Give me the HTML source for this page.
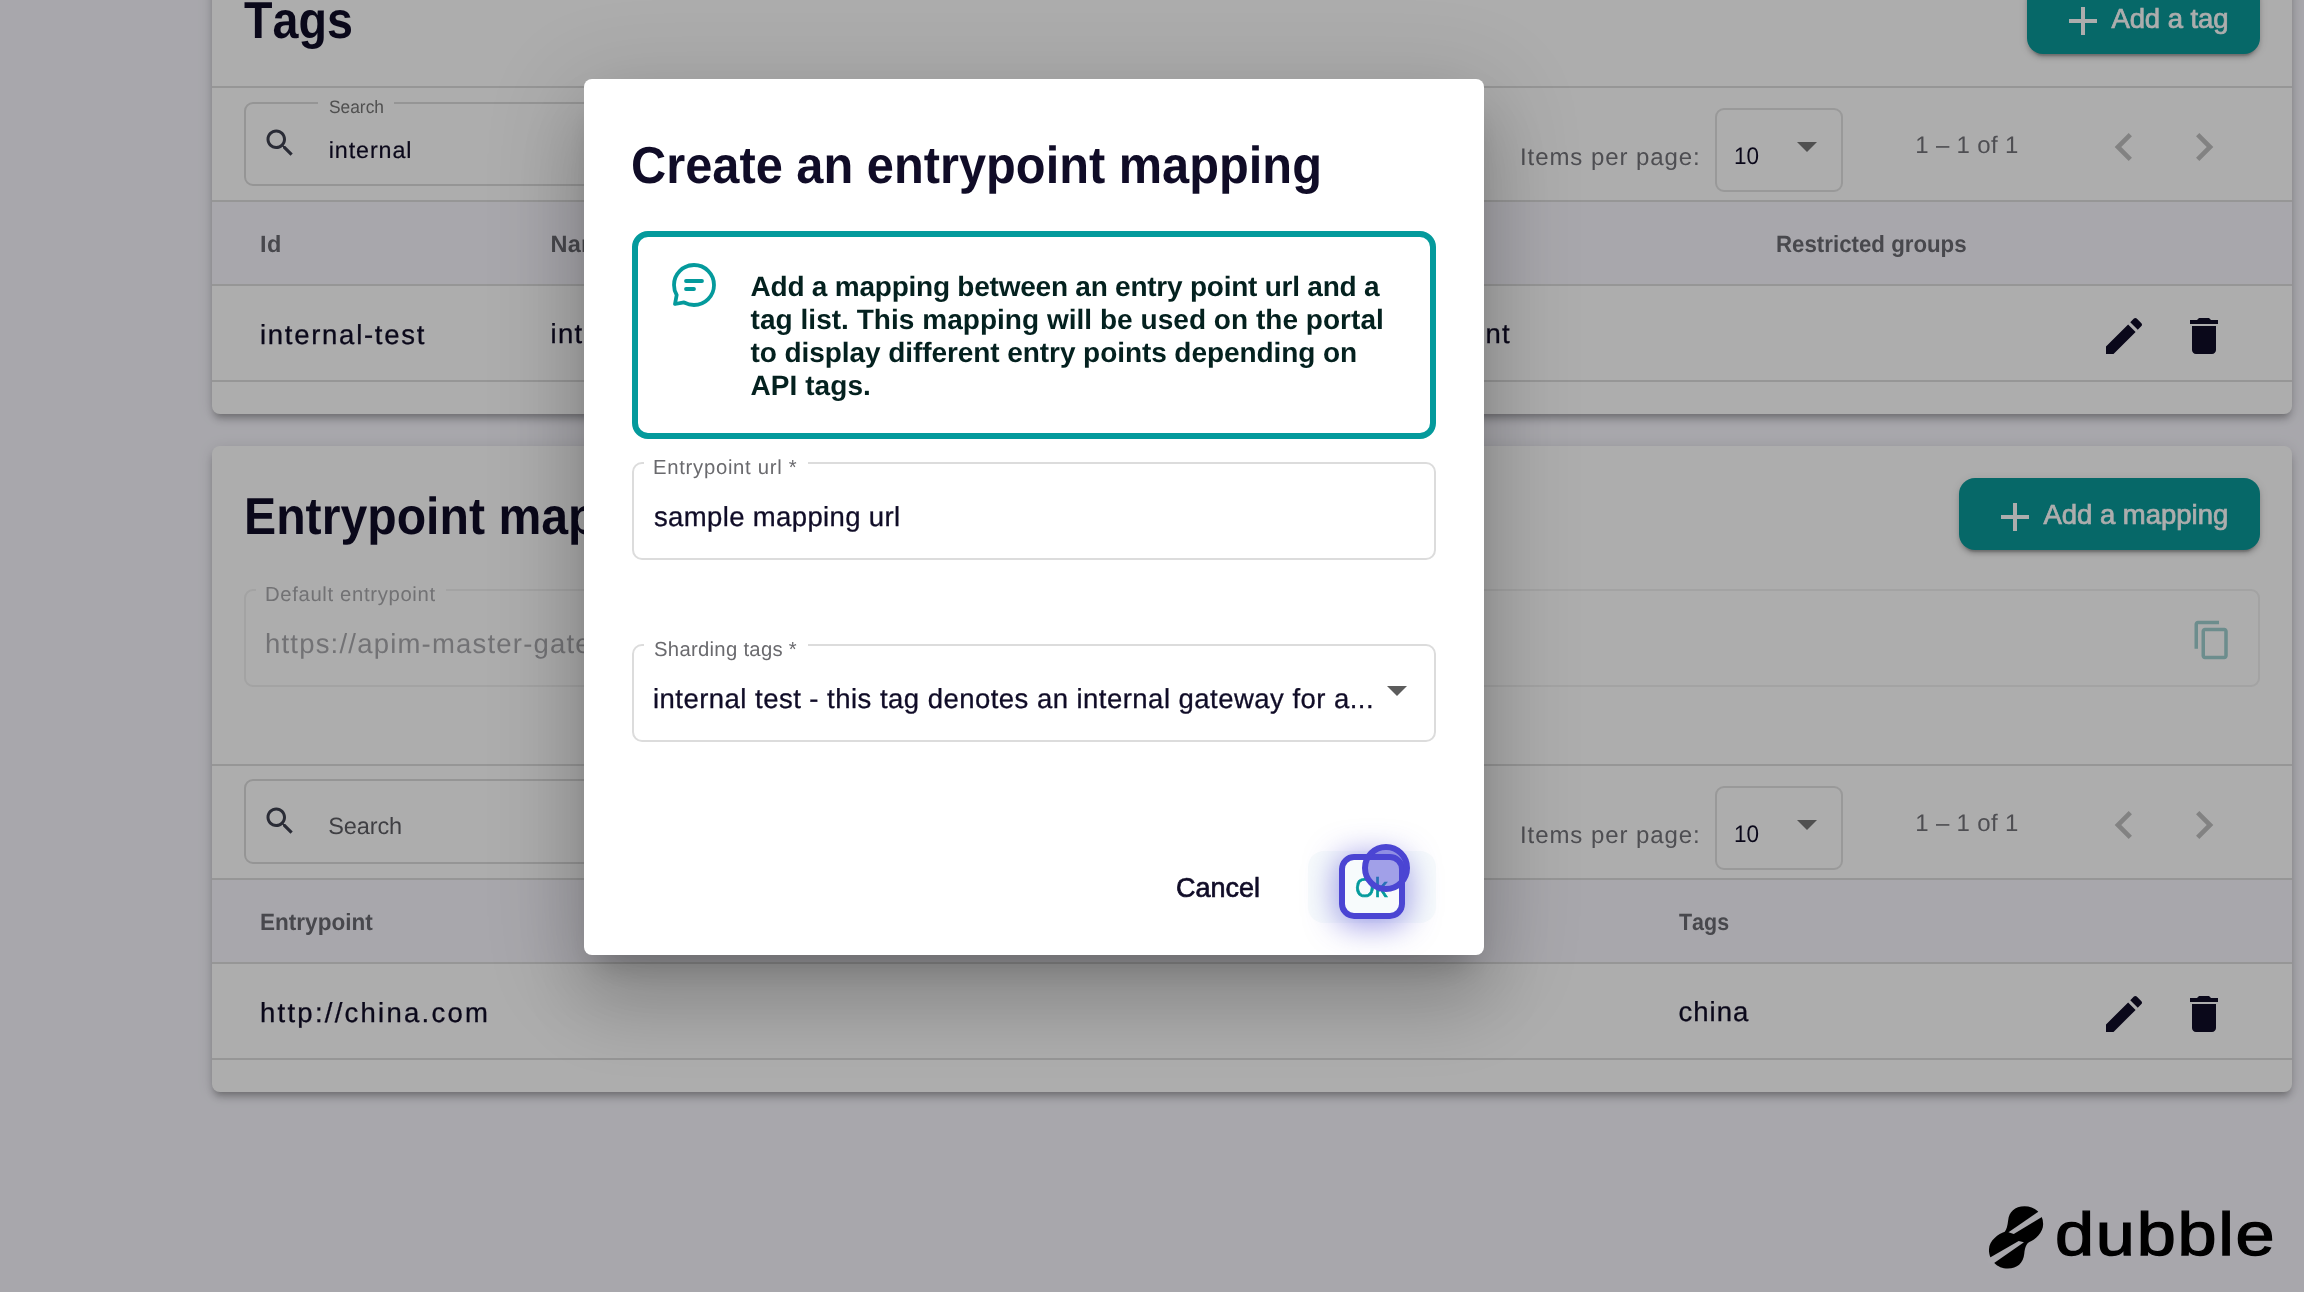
<!DOCTYPE html>
<html lang="en">
<head>
<meta charset="utf-8">
<title>Sharding tags – Create an entrypoint mapping</title>
<style>
*{box-sizing:border-box;margin:0;padding:0}
html,body{width:2304px;height:1292px;overflow:hidden}
body{position:relative;background:#f8f7fe;font-family:"Liberation Sans",sans-serif;font-kerning:none;text-rendering:geometricPrecision;-webkit-font-smoothing:antialiased}
.app{will-change:transform;position:absolute;left:0;top:0;width:2304px;height:1292px;overflow:hidden}
.t{position:absolute;white-space:nowrap;font-weight:400;background:none;border:0;font-family:inherit;display:block}
.ic{position:absolute;display:block;overflow:visible}
.card{position:absolute;background:#fff;border-radius:8px;box-shadow:0 6px 6px -4px rgba(0,0,0,.2),0 6px 8px 0 rgba(0,0,0,.14),0 2px 16px 0 rgba(0,0,0,.12)}
.hr{position:absolute;background:#dedede}
.thead{position:absolute;background:#f8f7fe}
.trow{position:absolute}
.btn-primary{position:absolute;background:#0a9a9a;border:0;border-radius:16px;box-shadow:0 6px 2px -4px rgba(0,0,0,.2),0 4px 4px 0 rgba(0,0,0,.14),0 2px 10px 0 rgba(0,0,0,.12);font-family:inherit}
.field{position:absolute;border-radius:9px}
.field.outline{border:2px solid #dcdcdc}
.field.outline.disabled{border-color:#f0f0f0}
.field.outline.light{border-color:#dcdcdc;border-radius:10px}
.notch{position:absolute;background:#fff}
.paginator{position:absolute}
.pg-select{position:absolute;border:2px solid #e2e2e2;border-radius:9px}
.pg-btn,.icon-btn{position:absolute;border:0;background:none;display:flex;align-items:center;justify-content:center}
.backdrop{position:absolute;left:0;top:0;width:2304px;height:1292px;background:rgba(0,0,0,.32)}
.dialog{will-change:transform;position:absolute;background:#fff;border-radius:8px;box-shadow:0 22px 30px -14px rgba(0,0,0,.2),0 48px 76px 6px rgba(0,0,0,.14),0 18px 92px 16px rgba(0,0,0,.12)}
.banner{position:absolute;border:6px solid #049a9c;border-radius:16px;background:#fff}
.btn-ok{position:absolute;border:0;border-radius:16px;background:#f7fbfc;font-family:inherit}
.hl-box{position:absolute;border:6px solid #4b45d3;border-radius:15px;box-shadow:0 4px 30px 4px rgba(75,69,211,.5)}
.hl-dot{position:absolute;border:6px solid #4b45d3;border-radius:50%;background:rgba(75,69,211,.5)}
.dubble{position:absolute;will-change:transform}

</style>
</head>
<body>
<main class="app">
<section class="card" style="left:212px;top:-60px;width:2080px;height:474px;">
<h2 class="t h2" style="left:32.40px;top:50.00px;font-size:52px;line-height:62px;font-weight:700;color:#100c27;transform:scaleX(0.8966);transform-origin:0 50%;">Tags</h2>
<button class="btn-primary" style="left:1815px;top:42px;width:233px;height:72px;">
<svg class="ic" style="left:31.5px;top:15px;width:48px;height:48px;" viewBox="0 0 24 24" fill="#fff" ><path d="M19 13h-6v6h-2v-6H5v-2h6V5h2v6h6v2z"/></svg>
<span class="t" style="left:84.40px;top:20.00px;font-size:27.5px;line-height:33px;letter-spacing:-0.080px;color:#fff;-webkit-text-stroke:0.7px #fff;">Add a tag</span>
</button>
<div class="hr" style="left:0px;top:146px;width:2080px;height:2px;"></div>
<div class="field outline" style="left:32px;top:162px;width:1230px;height:84px;">
<span class="notch" style="left:72px;top:-4px;width:76px;height:8px;"></span>
<label class="t lbl" style="left:82.90px;top:-8.00px;font-size:18px;line-height:22px;color:#767676;transform:scaleX(0.9639);transform-origin:0 50%;">Search</label>
<svg class="ic" style="left:16px;top:21.3px;width:36px;height:36px;" viewBox="0 0 24 24" fill="#3f4150" ><path d="M15.5 14h-.79l-.28-.27C15.41 12.59 16 11.11 16 9.5 16 5.91 13.09 3 9.5 3S3 5.91 3 9.5 5.91 16 9.5 16c1.61 0 3.09-.59 4.23-1.57l.27.28v.79l5 4.99L20.49 19l-4.99-5zm-6 0C7.01 14 5 11.99 5 9.5S7.01 5 9.5 5 14 7.01 14 9.5 11.99 14 9.5 14z"/></svg>
<span class="t" style="left:82.70px;top:32.00px;font-size:23.3px;line-height:28px;letter-spacing:0.910px;color:#100c27;-webkit-text-stroke:0.2px #100c27;">internal</span>
</div>
<div class="paginator" style="left:1288px;top:147px;width:792px;height:114px;">
<span class="t pg-label" style="left:20.00px;top:56.00px;font-size:24px;line-height:29px;letter-spacing:0.922px;color:#74747a;">Items per page:</span>
<div class="pg-select" style="left:215px;top:21px;width:128px;height:84px;">
<span class="t" style="left:16.66px;top:32.00px;font-size:24px;line-height:29px;color:#100c27;transform:scaleX(0.9389);transform-origin:0 50%;">10</span>
<svg class="ic" style="left:66px;top:12px;width:48px;height:48px;" viewBox="0 0 24 24" fill="#767676"><path d="M7 10l5 5 5-5z"/></svg>
</div>
<span class="t pg-range" style="left:415.20px;top:44.00px;font-size:24px;line-height:29px;letter-spacing:0.341px;color:#74747a;">1 – 1 of 1</span>
<button class="pg-btn" disabled style="left:584px;top:20px;width:80px;height:80px;"><svg viewBox="0 0 24 24" width="56" height="56" fill="#c0c0c0"><path d="M15.41 7.41L14 6l-6 6 6 6 1.41-1.410L10.83 12z"/></svg></button>
<button class="pg-btn" disabled style="left:664px;top:20px;width:80px;height:80px;"><svg viewBox="0 0 24 24" width="56" height="56" fill="#c0c0c0"><path d="M10 6L8.59 7.41 13.17 12l-4.580 4.590L10 18l6-6z"/></svg></button>
</div>
<div class="hr" style="left:0px;top:260px;width:2080px;height:2px;"></div>
<div class="thead" style="left:0px;top:262px;width:2080px;height:82px;">
<span class="t" style="left:48.00px;top:28.00px;font-size:23.5px;line-height:28px;font-weight:700;letter-spacing:0.471px;color:#6b6b72;">Id</span>
<span class="t" style="left:338.50px;top:28.00px;font-size:23.5px;line-height:28px;font-weight:700;letter-spacing:0.188px;color:#6b6b72;">Name</span>
<span class="t" style="left:629.00px;top:28.00px;font-size:23.5px;line-height:28px;font-weight:700;letter-spacing:0.300px;color:#6b6b72;">Description</span>
<span class="t" style="left:1563.85px;top:28.00px;font-size:23.5px;line-height:28px;font-weight:700;color:#6b6b72;transform:scaleX(0.9479);transform-origin:0 50%;">Restricted groups</span>
</div>
<div class="hr" style="left:0px;top:344px;width:2080px;height:2px;"></div>
<div class="trow" style="left:0px;top:346px;width:2080px;height:94px;">
<span class="t" style="left:48.00px;top:32.00px;font-size:27.5px;line-height:33px;letter-spacing:1.722px;color:#100c27;-webkit-text-stroke:0.3px #100c27;">internal-test</span>
<span class="t" style="left:338.50px;top:31.00px;font-size:27.5px;line-height:33px;letter-spacing:1.300px;color:#100c27;-webkit-text-stroke:0.3px #100c27;">internal test</span>
<span class="t" style="left:508.34px;top:31.00px;font-size:27.5px;line-height:33px;letter-spacing:1.300px;color:#100c27;-webkit-text-stroke:0.3px #100c27;">this tag denotes an internal gateway for a test environment</span>
<button class="icon-btn" style="left:1872px;top:10px;width:80px;height:80px;"><svg viewBox="0 0 24 24" width="48" height="48" fill="#100c27"><path d="M3 17.25V21h3.75L17.81 9.94l-3.75-3.75L3 17.25zM20.71 7.04c.39-.39.39-1.02 0-1.41l-2.34-2.34c-.39-.39-1.02-.39-1.41 0l-1.83 1.83 3.75 3.75 1.83-1.83z"/></svg></button><button class="icon-btn" style="left:1952px;top:10px;width:80px;height:80px;"><svg viewBox="0 0 24 24" width="48" height="48" fill="#100c27"><path d="M6 19c0 1.1.9 2 2 2h8c1.1 0 2-.9 2-2V7H6v12zM19 4h-3.500l-1-1h-5l-1 1H5v2h14V4z"/></svg></button>
</div>
<div class="hr" style="left:0px;top:440px;width:2080px;height:2px;"></div>
</section>
<section class="card" style="left:212px;top:446px;width:2080px;height:646px;">
<h2 class="t h2" style="left:32.02px;top:40.00px;font-size:52px;line-height:62px;font-weight:700;color:#100c27;transform:scaleX(0.9270);transform-origin:0 50%;">Entrypoint mappings</h2>
<button class="btn-primary" style="left:1747px;top:32px;width:301px;height:72px;">
<svg class="ic" style="left:31.7px;top:15.2px;width:48px;height:48px;" viewBox="0 0 24 24" fill="#fff" ><path d="M19 13h-6v6h-2v-6H5v-2h6V5h2v6h6v2z"/></svg>
<span class="t" style="left:84.40px;top:20.00px;font-size:27.5px;line-height:33px;letter-spacing:-0.008px;color:#fff;-webkit-text-stroke:0.7px #fff;">Add a mapping</span>
</button>
<div class="field outline disabled" style="left:32px;top:143px;width:2016px;height:98px;">
<span class="notch" style="left:10px;top:-4px;width:190px;height:8px;"></span>
<label class="t lbl" style="left:19.00px;top:-8.00px;font-size:20.3px;line-height:24px;letter-spacing:0.651px;color:#a8a8ac;">Default entrypoint</label>
<span class="t" style="left:19.00px;top:36.00px;font-size:27.5px;line-height:33px;letter-spacing:1.200px;color:#a9a9ad;">https://apim-master-gateway.cloud.gravitee.io</span>
<svg class="ic" style="left:1944.5px;top:28px;width:42px;height:42px;" viewBox="0 0 24 24" fill="#9fd0d0" ><path d="M16 1H4c-1.100 0-2 .9-2 2v14h2V3h12V1zm3 4H8c-1.100 0-2 .9-2 2v14c0 1.100.9 2 2 2h11c1.100 0 2-.9 2-2V7c0-1.100-.9-2-2-2zm0 16H8V7h11v14z"/></svg>
</div>
<div class="hr" style="left:0px;top:318px;width:2080px;height:2px;"></div>
<div class="field outline" style="left:32px;top:333px;width:1230px;height:85px;">
<svg class="ic" style="left:16px;top:22.3px;width:36px;height:36px;" viewBox="0 0 24 24" fill="#3f4150" ><path d="M15.5 14h-.79l-.28-.27C15.41 12.59 16 11.11 16 9.5 16 5.91 13.09 3 9.5 3S3 5.91 3 9.5 5.91 16 9.5 16c1.61 0 3.09-.59 4.23-1.57l.27.28v.79l5 4.99L20.49 19l-4.99-5zm-6 0C7.01 14 5 11.99 5 9.5S7.01 5 9.5 5 14 7.01 14 9.5 11.99 14 9.5 14z"/></svg>
<span class="t" style="left:82.30px;top:31.00px;font-size:23.5px;line-height:28px;letter-spacing:-0.138px;color:#5e5e64;">Search</span>
</div>
<div class="paginator" style="left:1288px;top:319px;width:792px;height:114px;">
<span class="t pg-label" style="left:20.00px;top:56.00px;font-size:24px;line-height:29px;letter-spacing:0.922px;color:#74747a;">Items per page:</span>
<div class="pg-select" style="left:215px;top:21px;width:128px;height:84px;">
<span class="t" style="left:16.66px;top:32.00px;font-size:24px;line-height:29px;color:#100c27;transform:scaleX(0.9389);transform-origin:0 50%;">10</span>
<svg class="ic" style="left:66px;top:12px;width:48px;height:48px;" viewBox="0 0 24 24" fill="#767676"><path d="M7 10l5 5 5-5z"/></svg>
</div>
<span class="t pg-range" style="left:415.20px;top:44.00px;font-size:24px;line-height:29px;letter-spacing:0.341px;color:#74747a;">1 – 1 of 1</span>
<button class="pg-btn" disabled style="left:584px;top:20px;width:80px;height:80px;"><svg viewBox="0 0 24 24" width="56" height="56" fill="#c0c0c0"><path d="M15.41 7.41L14 6l-6 6 6 6 1.41-1.410L10.83 12z"/></svg></button>
<button class="pg-btn" disabled style="left:664px;top:20px;width:80px;height:80px;"><svg viewBox="0 0 24 24" width="56" height="56" fill="#c0c0c0"><path d="M10 6L8.59 7.41 13.17 12l-4.580 4.590L10 18l6-6z"/></svg></button>
</div>
<div class="hr" style="left:0px;top:432px;width:2080px;height:2px;"></div>
<div class="thead" style="left:0px;top:434px;width:2080px;height:82px;">
<span class="t" style="left:48.04px;top:28.00px;font-size:23.5px;line-height:28px;font-weight:700;color:#6b6b72;transform:scaleX(0.9600);transform-origin:0 50%;">Entrypoint</span>
<span class="t" style="left:1467.00px;top:28.00px;font-size:23.5px;line-height:28px;font-weight:700;color:#6b6b72;transform:scaleX(0.9128);transform-origin:0 50%;">Tags</span>
</div>
<div class="hr" style="left:0px;top:516px;width:2080px;height:2px;"></div>
<div class="trow" style="left:0px;top:518px;width:2080px;height:94px;">
<span class="t" style="left:48.00px;top:32.00px;font-size:27.5px;line-height:33px;letter-spacing:2.252px;color:#100c27;-webkit-text-stroke:0.3px #100c27;">http://china.com</span>
<span class="t" style="left:1466.50px;top:31.00px;font-size:27.5px;line-height:33px;letter-spacing:1.013px;color:#100c27;-webkit-text-stroke:0.3px #100c27;">china</span>
<button class="icon-btn" style="left:1872px;top:10px;width:80px;height:80px;"><svg viewBox="0 0 24 24" width="48" height="48" fill="#100c27"><path d="M3 17.25V21h3.75L17.81 9.94l-3.75-3.75L3 17.25zM20.71 7.04c.39-.39.39-1.02 0-1.41l-2.34-2.34c-.39-.39-1.02-.39-1.41 0l-1.83 1.83 3.75 3.75 1.83-1.83z"/></svg></button><button class="icon-btn" style="left:1952px;top:10px;width:80px;height:80px;"><svg viewBox="0 0 24 24" width="48" height="48" fill="#100c27"><path d="M6 19c0 1.1.9 2 2 2h8c1.1 0 2-.9 2-2V7H6v12zM19 4h-3.500l-1-1h-5l-1 1H5v2h14V4z"/></svg></button>
</div>
<div class="hr" style="left:0px;top:612px;width:2080px;height:2px;"></div>
</section>
</main>
<div class="backdrop"></div>
<div class="dialog" role="dialog" style="left:584px;top:79px;width:900px;height:876px;">
<h2 class="t h2" style="left:46.62px;top:56.00px;font-size:52px;line-height:62px;font-weight:700;color:#100c27;transform:scaleX(0.9378);transform-origin:0 50%;">Create an entrypoint mapping</h2>
<div class="banner" style="left:48px;top:152px;width:804px;height:208px;">
<svg class="ic" style="left:32px;top:24px;width:48px;height:48px;" viewBox="0 0 24 24" fill="none" stroke="#049a9c" stroke-width="1.9" stroke-linecap="round" stroke-linejoin="round"><path d="M8 10h8M8 14h4M12 22c5.523 0 10-4.477 10-10S17.523 2 12 2 2 6.477 2 12c0 1.821.487 3.530 1.338 5L2.500 21.500l4.500-.838A9.955 9.955 0 0012 22z"/></svg>
<p class="banner-text">
<span class="t" style="left:112.60px;top:33.00px;font-size:28px;line-height:34px;font-weight:700;letter-spacing:-0.232px;color:#04211f;">Add a mapping between an entry point url and a</span>
<span class="t" style="left:112.60px;top:66.00px;font-size:28px;line-height:34px;font-weight:700;letter-spacing:0.033px;color:#04211f;">tag list. This mapping will be used on the portal</span>
<span class="t" style="left:112.60px;top:99.00px;font-size:28px;line-height:34px;font-weight:700;letter-spacing:-0.073px;color:#04211f;">to display different entry points depending on</span>
<span class="t" style="left:112.60px;top:132.00px;font-size:28px;line-height:34px;font-weight:700;letter-spacing:0.047px;color:#04211f;">API tags.</span>
</p>
</div>
<div class="field outline light" style="left:48px;top:383px;width:804px;height:98px;">
<span class="notch w" style="left:10px;top:-4px;width:164px;height:8px;"></span>
<label class="t lbl" style="left:19.00px;top:-8.00px;font-size:20.3px;line-height:24px;letter-spacing:0.712px;color:#6a6a6e;">Entrypoint url *</label>
<span class="t" style="left:20.00px;top:36.00px;font-size:27.5px;line-height:33px;letter-spacing:0.361px;color:#100c27;-webkit-text-stroke:0.3px #100c27;">sample mapping url</span>
</div>
<div class="field outline light" style="left:48px;top:565px;width:804px;height:98px;">
<span class="notch w" style="left:10px;top:-4px;width:164px;height:8px;"></span>
<label class="t lbl" style="left:20.00px;top:-8.00px;font-size:20.3px;line-height:24px;letter-spacing:0.287px;color:#6a6a6e;">Sharding tags *</label>
<span class="t" style="left:19.00px;top:36.00px;font-size:27.5px;line-height:33px;letter-spacing:0.469px;color:#100c27;-webkit-text-stroke:0.3px #100c27;">internal test - this tag denotes an internal gateway for a...</span>
<svg class="ic" style="left:739px;top:20px;width:48px;height:48px;" viewBox="0 0 24 24" fill="#5c5c5c"><path d="M7 10l5 5 5-5z"/></svg>
</div>
<button class="t btn-text" style="left:592.24px;top:792.00px;font-size:28px;line-height:34px;color:#100c27;transform:scaleX(0.9631);transform-origin:0 50%;-webkit-text-stroke:0.7px #100c27;">Cancel</button>
<button class="btn-ok" style="left:724px;top:772px;width:128px;height:72px;">
<span class="t" style="left:47.09px;top:20.00px;font-size:28px;line-height:34px;color:#049a9c;transform:scaleX(0.9056);transform-origin:0 50%;-webkit-text-stroke:0.7px #049a9c;">Ok</span>
</button>
</div>
<div class="hl-box" style="left:1339px;top:853.5px;width:66px;height:65.5px;"></div>
<div class="hl-dot" style="left:1362px;top:844px;width:48px;height:48px;"></div>
<div class="dubble" style="left:1980px;top:1198px;width:324px;height:94px;">
<svg class="ic" style="left:0px;top:0px;width:72px;height:80px;" viewBox="0 0 1163 1292"><path fill="#000" d="M720 135C560 135 470 230 455 360C445 450 430 510 400 545C300 580 150 680 145 830C140 1000 280 1140 450 1140C600 1140 700 1050 715 900C725 800 750 740 790 715C900 670 1020 560 1020 420C1020 250 880 135 720 135Z"/><path fill="#a9a8ad" d="M460 555L545 580L1060 271L1000 180Z"/><path fill="#a9a8ad" d="M625 695L710 715L170 1090L100 997Z"/></svg>
<span class="t wordmark" style="left:74.68px;top:0.00px;font-size:60.5px;line-height:73px;letter-spacing:1.500px;color:#000;transform:scaleX(1.1613);transform-origin:0 50%;-webkit-text-stroke:1.3px #000;">dubble</span>
</div>
</body>
</html>
